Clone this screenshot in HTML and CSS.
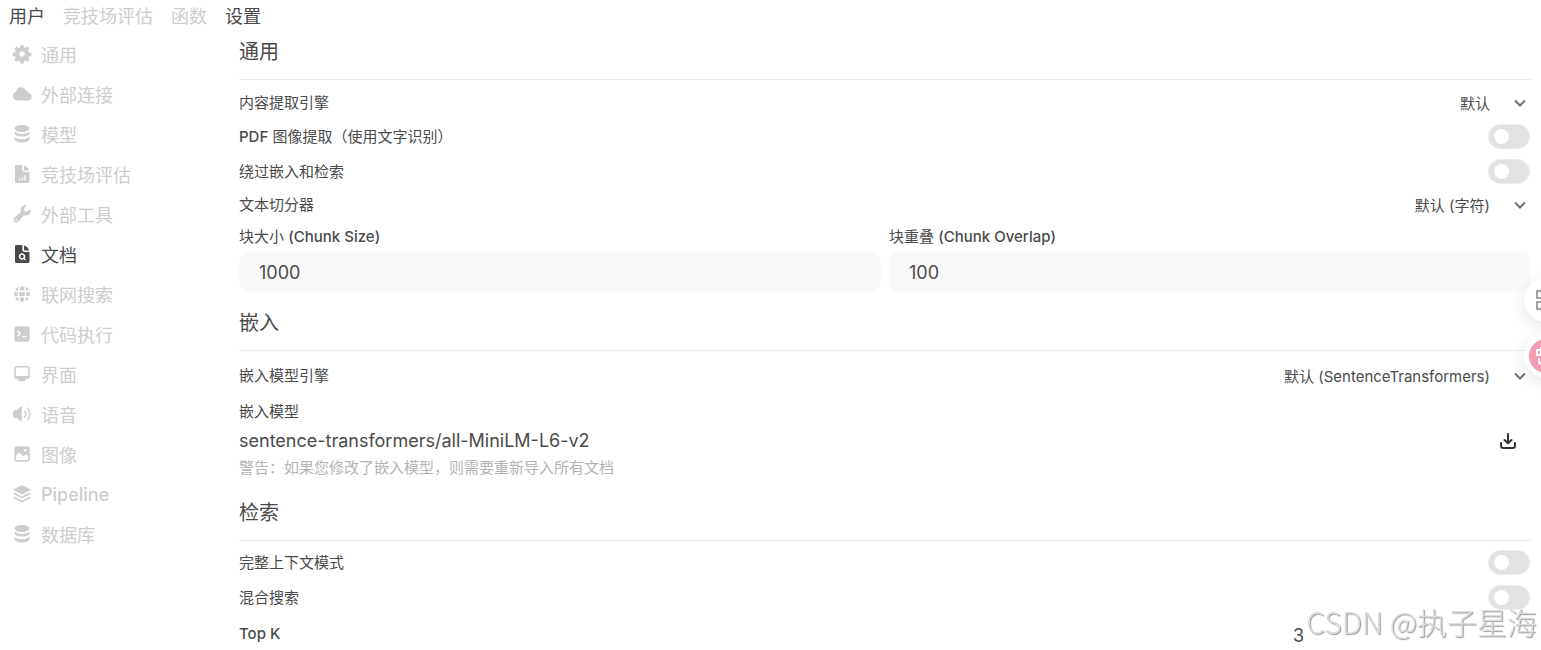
FILE: index.html
```
<!DOCTYPE html>
<html lang="zh-CN">
<head>
    <meta charset="UTF-8">
    <meta name="viewport" content="width=device-width, initial-scale=1.0">
    <title>设置</title>
    <link rel="stylesheet" href="styles.css">
</head>
<body>
    <nav class="tabs">
        <a class="active" href="#users">用户</a>
        <a href="#evaluations">竞技场评估</a>
        <a href="#functions">函数</a>
        <a class="active" href="#settings">设置</a>
    </nav>

    <div class="layout">
        <aside class="sidebar">
            <a href="#general">
                <svg viewBox="0 0 20 20"><path fill-rule="evenodd" d="M8.400 1h3.200l.5 2.600 1.200.5 2.200-1.500 2.200 2.200-1.500 2.200.5 1.200 2.600.5v3.200l-2.600.5-.5 1.200 1.500 2.200-2.200 2.200-2.200-1.500-1.200.5-.5 2.600H8.400l-.5-2.600-1.200-.5-2.200 1.500-2.200-2.200 1.500-2.200-.5-1.200L.7 11.900V8.700l2.600-.5.5-1.200-1.500-2.200 2.200-2.200 2.200 1.500 1.200-.5zM10 7.300a2.700 2.700 0 1 0 0 5.400 2.700 2.700 0 0 0 0-5.400z"/></svg>
                通用
            </a>
            <a href="#connections">
                <svg viewBox="0 0 20 20"><path d="M5.500 16.500a4.500 4.500 0 0 1-1.400-8.750 5 5 0 0 1 9.500-1.600A4 4 0 0 1 16.500 9 3.800 3.800 0 0 1 15.300 16.500z"/></svg>
                外部连接
            </a>
            <a href="#models">
                <svg viewBox="0 0 20 20"><ellipse cx="10" cy="4.500" rx="7.500" ry="3.500"/><path d="M2.500 7.500c1.500 1.600 4.300 2.400 7.500 2.400s6-.8 7.500-2.400v1.400c0 2-3.300 3.500-7.500 3.500s-7.500-1.500-7.500-3.500zM2.500 12.700c1.500 1.600 4.300 2.400 7.500 2.400s6-.8 7.500-2.400v2.300c0 2-3.300 3.500-7.500 3.500S2.500 17 2.500 15z"/></svg>
                模型
            </a>
            <a href="#arena">
                <svg viewBox="0 0 20 20"><path fill-rule="evenodd" d="M4.500 1h5.800v4.500c0 1.500 1 2.500 2.500 2.500h4.700v9.500c0 .9-.6 1.500-1.500 1.500h-11.500c-.9 0-1.500-.6-1.500-1.500v-15C3 1.600 3.600 1 4.500 1zM7 14.500v2h1.200v-2zm2.700-1.700v3.700h1.200v-3.700zm2.700-1.900v5.600h1.200v-5.600z"/><path d="M12 1.500c2.500.8 4.300 2.500 5.200 5h-4.200c-.6 0-1-.4-1-1z"/></svg>
                竞技场评估
            </a>
            <a href="#tools">
                <svg viewBox="0 0 20 20"><path fill-rule="evenodd" d="M18.700 5.100a5.200 5.200 0 0 1-6.800 6.200l-6 6.700a2.800 2.800 0 0 1-3.900-3.900l6.700-6a5.200 5.200 0 0 1 6.200-6.800l-3 3 .5 2.800 2.800.5zM4.200 15a.9.9 0 1 0 0 1.800.9.9 0 0 0 0-1.800z"/></svg>
                外部工具
            </a>
            <a class="active" href="#documents">
                <svg viewBox="0 0 20 20"><path fill-rule="evenodd" d="M4.500 1h5.800v4.500c0 1.500 1 2.500 2.500 2.500h4.700v9.500c0 .9-.6 1.500-1.500 1.500h-11.500c-.9 0-1.500-.6-1.500-1.500v-15C3 1.600 3.600 1 4.500 1zM10 9.300a3.200 3.200 0 1 0 1.600 6l1.300 1.300 1-1-1.200-1.300A3.200 3.200 0 0 0 10 9.300zm0 1.500a1.700 1.700 0 1 1 0 3.400 1.700 1.700 0 0 1 0-3.400z"/><path d="M12 1.500c2.500.8 4.300 2.500 5.200 5h-4.200c-.6 0-1-.4-1-1z"/></svg>
                文档
            </a>
            <a href="#web">
                <svg viewBox="0 0 20 20"><circle cx="10" cy="10" r="8"/><path class="cut" d="M2 7.200h16M2 12.800h16M8 2c-2 5-2 11 0 16M12 2c2 5 2 11 0 16"/></svg>
                联网搜索
            </a>
            <a href="#code">
                <svg viewBox="0 0 20 20"><rect x="2.300" y="2.300" width="15.400" height="15.400" rx="2.500"/><path class="cut" d="M5.500 7l2.800 2.600-2.800 2.600M10 12.500h4.500"/></svg>
                代码执行
            </a>
            <a href="#interface">
                <svg viewBox="0 0 20 20"><path fill-rule="evenodd" d="M5 2h10a2.700 2.700 0 0 1 2.700 2.700v7.600A2.700 2.700 0 0 1 15 15h-1.500v2h-7v-2H5a2.700 2.700 0 0 1-2.700-2.700V4.700A2.700 2.700 0 0 1 5 2zM5 3.600c-.7 0-1.100.4-1.100 1.100v6.200c0 .7.400 1.100 1.100 1.100h10c.7 0 1.100-.4 1.100-1.100V4.700c0-.7-.4-1.100-1.100-1.100z"/></svg>
                界面
            </a>
            <a href="#audio">
                <svg viewBox="0 0 20 20"><path d="M9.800 3.200v13.600c0 .7-.8 1-1.300.5L5 14H2.500C1.500 13 1 11.600 1 10s.5-3 1.500-4H5l3.500-3.300c.5-.5 1.300-.2 1.300.5z"/><path class="line" d="M12.500 7c1.500 1.700 1.500 4.300 0 6M15.500 4.200c3 3.300 3 8.300 0 11.600"/></svg>
                语音
            </a>
            <a href="#images">
                <svg viewBox="0 0 20 20"><path fill-rule="evenodd" d="M4.800 2.300h10.400c1.500 0 2.500 1 2.500 2.500v10.400c0 1.500-1 2.500-2.500 2.500H4.800c-1.500 0-2.500-1-2.500-2.500V4.800c0-1.500 1-2.500 2.500-2.500zM3.900 12v3.200c0 .6.300.9.900.9h10.400c.6 0 .9-.3.900-.9v-3l-2-2-2.600 2.400L7.500 8.600zM13.300 5a1.300 1.300 0 1 0 0 2.600 1.300 1.300 0 0 0 0-2.600z"/></svg>
                图像
            </a>
            <a class="latin" href="#pipelines">
                <svg viewBox="0 0 20 20"><path d="M10 1l9 4.700-9 4.700-9-4.700zM2.800 8.800L10 12.500l7.200-3.700L19 9.800l-9 4.700-9-4.700zM2.800 12.900L10 16.600l7.200-3.700 1.800 1-9 4.700-9-4.700z"/></svg>
                Pipeline
            </a>
            <a href="#database">
                <svg viewBox="0 0 20 20"><ellipse cx="10" cy="4.500" rx="7.500" ry="3.500"/><path d="M2.500 7.500c1.500 1.600 4.300 2.400 7.500 2.400s6-.8 7.500-2.400v1.400c0 2-3.300 3.500-7.500 3.500s-7.500-1.500-7.500-3.500zM2.500 12.700c1.500 1.600 4.300 2.400 7.500 2.400s6-.8 7.500-2.400v2.300c0 2-3.300 3.500-7.500 3.500S2.500 17 2.500 15z"/></svg>
                数据库
            </a>
        </aside>

        <main class="content">
            <section>
                <h2>通用</h2>
                <div class="fields">
                    <div class="row">
                        <label for="engine">内容提取引擎</label>
                        <span class="select">
                            <select id="engine"><option>默认</option></select>
                            <svg viewBox="0 0 12 12"><path d="M1 3.500l5 5 5-5"/></svg>
                        </span>
                    </div>
                    <div class="row switch-row">
                        <label for="ocr"><span class="latin">PDF</span> 图像提取（使用文字识别）</label>
                        <input class="switch" type="checkbox" id="ocr">
                    </div>
                    <div class="row switch-row">
                        <label for="bypass">绕过嵌入和检索</label>
                        <input class="switch" type="checkbox" id="bypass">
                    </div>
                    <div class="row">
                        <label for="splitter">文本切分器</label>
                        <span class="select">
                            <select id="splitter"><option>默认 (字符)</option></select>
                            <svg viewBox="0 0 12 12"><path d="M1 3.500l5 5 5-5"/></svg>
                        </span>
                    </div>
                    <div class="chunks">
                        <div class="chunk">
                            <label for="chunkSize">块大小 <span class="latin">(Chunk Size)</span></label>
                            <input type="text" id="chunkSize" value="1000">
                        </div>
                        <div class="chunk">
                            <label for="chunkOverlap">块重叠 <span class="latin">(Chunk Overlap)</span></label>
                            <input type="text" id="chunkOverlap" value="100">
                        </div>
                    </div>
                </div>
            </section>

            <section>
                <h2>嵌入</h2>
                <div class="fields roomy">
                    <div class="row">
                        <label for="embedding">嵌入模型引擎</label>
                        <span class="select">
                            <select id="embedding"><option>默认 (SentenceTransformers)</option></select>
                            <svg viewBox="0 0 12 12"><path d="M1 3.500l5 5 5-5"/></svg>
                        </span>
                    </div>
                    <div class="model">
                        <label for="model">嵌入模型</label>
                        <div class="model-input">
                            <input type="text" id="model" value="sentence-transformers/all-MiniLM-L6-v2">
                            <button type="button" aria-label="下载">
                                <svg viewBox="0 0 16 16"><path d="M8 1v9M4.500 7L8 10.300 11.500 7M1 10v2.500C1 14 2 15 3.500 15h9c1.500 0 2.500-1 2.500-2.500V10"/></svg>
                            </button>
                        </div>
                        <p class="warning">警告：如果您修改了嵌入模型，则需要重新导入所有文档</p>
                    </div>
                </div>
            </section>

            <section>
                <h2>检索</h2>
                <div class="fields compact">
                    <div class="row switch-row">
                        <label for="fullContext">完整上下文模式</label>
                        <input class="switch" type="checkbox" id="fullContext">
                    </div>
                    <div class="row switch-row">
                        <label for="hybrid">混合搜索</label>
                        <input class="switch" type="checkbox" id="hybrid">
                    </div>
                    <div class="row number-row">
                        <label class="latin" for="topK">Top K</label>
                        <input type="text" id="topK" value="3">
                    </div>
                </div>
            </section>
        </main>
    </div>

    <div class="floating">
        <button class="bubble" type="button" aria-label="应用">
            <svg viewBox="0 0 20 20"><path d="M1 1h7v7H1zM12 1h7v7h-7zM1 12h7v7H1zM12 12h7v7h-7z"/></svg>
        </button>
        <button class="bubble pink" type="button" aria-label="翻译">
            <svg viewBox="0 0 20 20"><path d="M1 4h8v5H1zM5 1v8M3 12v3c0 2 1 3 3 3h3M12 2h7M12 8h7"/></svg>
        </button>
    </div>
    <div class="watermark">CSDN @执子星海</div>
</body>
</html>
```
FILE: styles.css
```
* {
    box-sizing: border-box;
}
body {
    margin: 0;
    height: 100vh;
    overflow: hidden;
    display: flex;
    flex-direction: column;
    font-family: Inter, "Noto Sans CJK SC", sans-serif;
    font-size: 15px;
    background-color: #fff;
    color: #4a4a4a;
}
a {
    color: #cdcdcd;
    text-decoration: none;
}
a.active {
    color: #4a4a4a;
}
input,
select,
button {
    font-family: inherit;
    color: inherit;
    border: none;
    background: none;
    padding: 0;
    margin: 0;
    outline: none;
}
svg {
    display: block;
}
.latin {
    font-weight: 500;
}
.tabs {
    display: flex;
    gap: 18px;
    padding: 2px 9px 0;
    font-size: 18px;
    line-height: 30px;
}
.layout {
    display: flex;
    flex: 1;
    min-height: 0;
    padding: 0 10px 0 12px;
}
.sidebar {
    width: 227px;
    flex-shrink: 0;
    padding-top: 2px;
    font-size: 18px;
}
.sidebar a {
    display: flex;
    align-items: center;
    gap: 9px;
    height: 40px;
}
.sidebar svg {
    width: 20px;
    height: 20px;
    fill: currentColor;
}
.sidebar .cut {
    fill: none;
    stroke: #fff;
    stroke-width: 1.5;
}
.sidebar .line {
    fill: none;
    stroke: currentColor;
    stroke-width: 1.6;
    stroke-linecap: round;
}
.content {
    flex: 1;
    min-width: 0;
    overflow: hidden;
}
h2 {
    margin: 0;
    padding-bottom: 7px;
    border-bottom: 1px solid #ececec;
    font-size: 20px;
    font-weight: 400;
    line-height: 40px;
}
section + section {
    margin-top: 11px;
}
.fields {
    padding-top: 7px;
}
.fields.roomy {
    padding-top: 9px;
}
.fields.compact {
    padding-top: 4px;
}
.row {
    display: flex;
    align-items: center;
    justify-content: space-between;
    height: 32px;
}
.row label {
    padding-bottom: 3px;
}
.switch-row {
    height: 35px;
}
.select {
    position: relative;
}
.select select {
    appearance: none;
    height: 32px;
    padding-right: 41px;
    font-size: 15px;
    text-align-last: right;
}
.select svg {
    position: absolute;
    top: 10px;
    right: 5px;
    width: 12px;
    height: 12px;
    fill: none;
    stroke: #6b7280;
    stroke-width: 2;
    pointer-events: none;
}
.switch {
    appearance: none;
    display: flex;
    align-items: center;
    width: 42px;
    height: 25px;
    margin-right: 1px;
    padding: 0 5px;
    border: 1px solid #ececec;
    border-radius: 13px;
    background-color: #e2e2e2;
}
.switch::before {
    content: "";
    width: 15px;
    height: 15px;
    border-radius: 50%;
    background-color: #fff;
}
.switch:checked {
    justify-content: flex-end;
    background-color: #10b981;
}
.chunks {
    display: flex;
    gap: 8px;
}
.chunk {
    flex: 1;
}
.chunk label {
    display: block;
    line-height: 31px;
}
.chunk input {
    display: block;
    width: 100%;
    height: 40px;
    padding: 0 20px;
    border-radius: 10px;
    background-color: #f9f9f9;
    font-size: 18px;
}
.model {
    padding-top: 5px;
}
.model label {
    display: block;
    line-height: 30px;
}
.model-input {
    display: flex;
    align-items: center;
    height: 27px;
}
.model-input input {
    flex: 1;
    font-size: 18px;
}
.model-input button {
    padding: 0 15px;
}
.model-input svg {
    width: 16px;
    height: 16px;
    fill: none;
    stroke: #333;
    stroke-width: 2;
    stroke-linecap: round;
    stroke-linejoin: round;
}
.warning {
    margin: 0;
    color: #b4b4b4;
    line-height: 28px;
}
.number-row {
    height: 40px;
}
.number-row input {
    width: 238px;
    font-size: 18px;
}
/* buttons half hidden behind the window edge */
.floating {
    position: fixed;
    top: 278px;
    right: -27px;
    display: flex;
    flex-direction: column;
    gap: 12px;
}
.bubble {
    display: flex;
    align-items: center;
    width: 44px;
    height: 44px;
    padding-left: 12px;
    border-radius: 50%;
    background-color: #fff;
    box-shadow: 0 4px 16px rgba(0, 0, 0, 0.1);
}
.bubble svg {
    width: 20px;
    height: 20px;
    flex-shrink: 0;
    fill: none;
    stroke: #888;
    stroke-width: 1.6;
}
.bubble.pink {
    border: 5px solid #fff;
    padding-left: 7px;
    background-color: #f29bb2;
}
.bubble.pink svg {
    stroke: #fff;
    stroke-width: 2;
}
.watermark {
    position: fixed;
    right: 4px;
    bottom: 9px;
    font-family: "Noto Sans CJK SC", sans-serif;
    font-size: 30px;
    font-weight: 300;
    line-height: 40px;
    color: #dcdcdc;
    text-shadow: 1px 1px 1px #999;
}
```
